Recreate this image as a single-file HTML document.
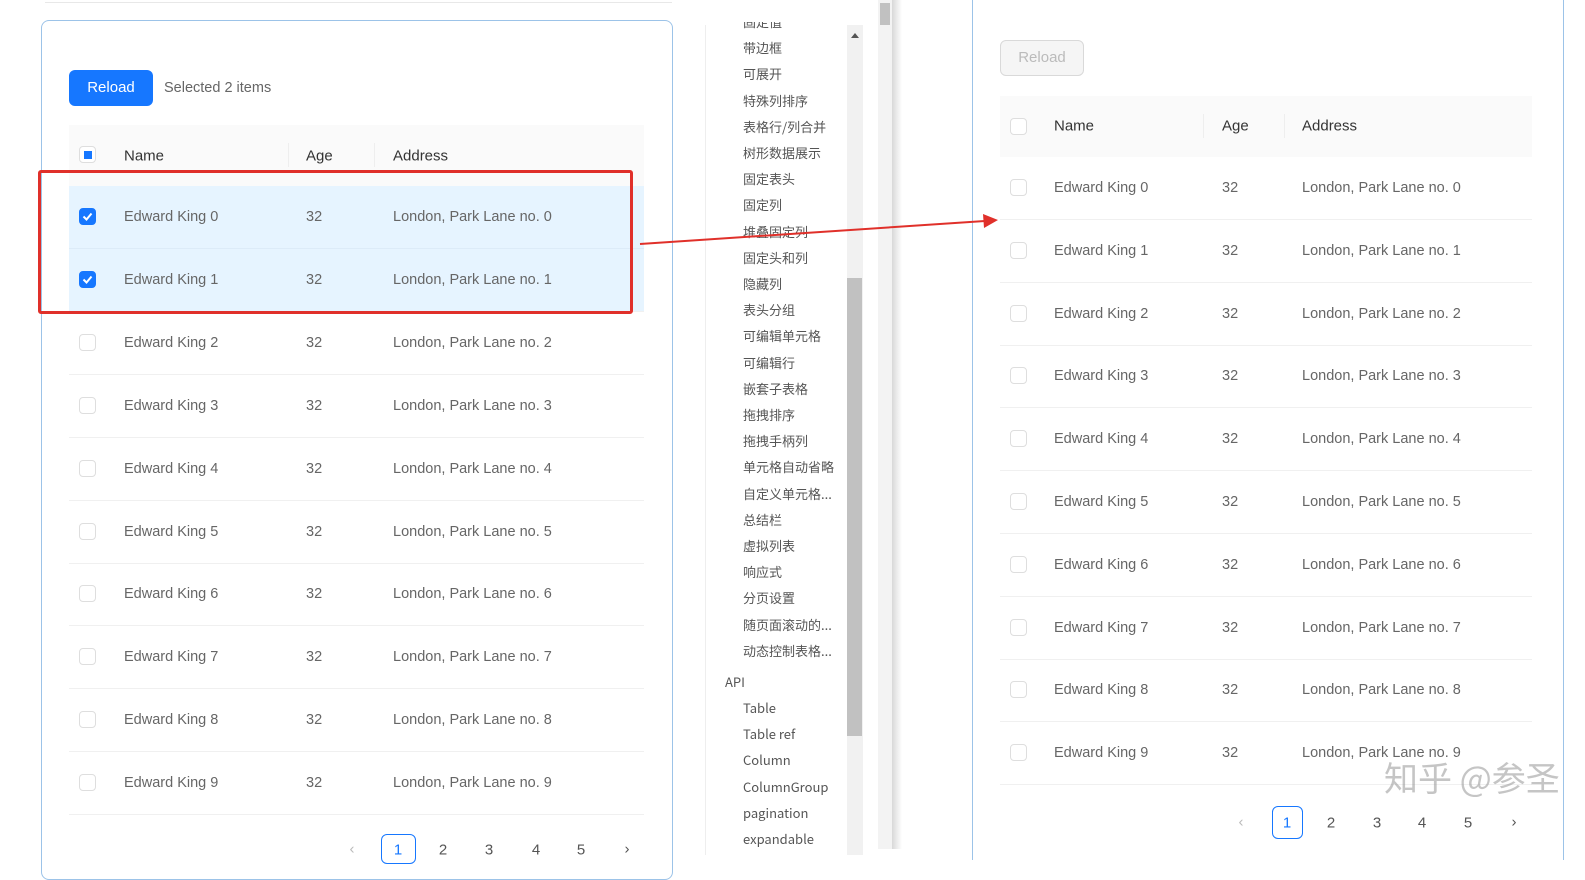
<!DOCTYPE html>
<html><head><meta charset="utf-8"><style>
*{margin:0;padding:0;box-sizing:border-box}
body{width:1585px;height:849px;overflow:hidden;background:#fff;position:relative;font-family:"Liberation Sans","Noto Sans CJK SC",sans-serif;color:#666;font-size:14.5px}
.a{position:absolute}
.panel{position:absolute;border:1.5px solid #9cc3e8;border-radius:8px;background:#fff}
.cb{position:absolute;width:17px;height:17px;border:1px solid #dedede;border-radius:4px;background:#fff}
.cb.on{background:#1677ff;border-color:#1677ff}
.t{position:absolute;white-space:nowrap;transform:translateY(-50%)}
.h{color:#333;font-size:15px}
.line{position:absolute;height:1px;background:#f0f0f0}
.side{position:absolute;left:743px;font-size:13px;color:#555;white-space:nowrap;font-family:"Noto Sans CJK SC","Liberation Sans",sans-serif}
.pg{position:absolute;font-size:15px;color:#555;transform:translate(-50%,-50%)}
</style></head><body>
<div class="a" style="left:45px;top:0;width:627px;height:3px;border-bottom:1px solid #e8e8e8"></div>

<div class="panel" style="left:41px;top:20px;width:632px;height:860px"></div>
<div class="a" style="left:69px;top:70px;width:84px;height:36px;background:#1677ff;border-radius:6px;color:#fff;font-size:15px;line-height:36px;text-align:center">Reload</div>
<div class="t" style="left:164px;top:88px">Selected 2 items</div>
<div class="a" style="left:69px;top:125px;width:575px;height:61px;background:#fafafa"></div>
<div class="a" style="left:288px;top:143px;width:1px;height:24px;background:#eee"></div>
<div class="a" style="left:374px;top:143px;width:1px;height:24px;background:#eee"></div>
<div class="cb" style="left:79px;top:146px"></div><div class="a" style="left:84px;top:151px;width:8px;height:8px;background:#1677ff"></div>
<div class="t h" style="left:124px;top:156px">Name</div>
<div class="t h" style="left:306px;top:156px">Age</div>
<div class="t h" style="left:393px;top:156px">Address</div>
<div class="a" style="left:69px;top:186px;width:575px;height:126px;background:#e6f4ff"></div>
<div class="line" style="left:69px;top:248px;width:575px;background:#dcebf8"></div>
<div id="L"></div>

<div class="a" style="left:705px;top:25px;width:1px;height:830px;background:#eee"></div>
<div class="a" style="left:847px;top:25px;width:16px;height:830px;background:#f1f1f1"></div>
<div class="a" style="left:847px;top:278px;width:15px;height:458px;background:#c1c1c1"></div>
<div class="a" style="left:851px;top:33px;width:0;height:0;border-left:4px solid transparent;border-right:4px solid transparent;border-bottom:5px solid #555"></div>
<div class="a" style="left:878px;top:0;width:14px;height:849px;background:#f3f3f3"></div>
<div class="a" style="left:880px;top:3px;width:10px;height:22px;background:#c1c1c1"></div>
<div class="a" style="left:892px;top:0;width:10px;height:849px;background:linear-gradient(90deg,#d8d8d8,#fff)"></div>
<div id="S"></div>

<div class="a" style="left:972px;top:0;width:592px;height:860px;border-left:1.5px solid #9cc3e8;border-right:1.5px solid #9cc3e8"></div>
<div class="a" style="left:1000px;top:40px;width:84px;height:36px;background:#f5f5f5;border:1px solid #d9d9d9;border-radius:6px;color:#bbb;font-size:15px;line-height:34px;text-align:center">Reload</div>
<div class="a" style="left:1000px;top:96px;width:532px;height:61px;background:#fafafa"></div>
<div class="a" style="left:1203px;top:114px;width:1px;height:24px;background:#eee"></div>
<div class="a" style="left:1284px;top:114px;width:1px;height:24px;background:#eee"></div>
<div class="cb" style="left:1010px;top:118px"></div>
<div class="t h" style="left:1054px;top:126px">Name</div>
<div class="t h" style="left:1222px;top:126px">Age</div>
<div class="t h" style="left:1302px;top:126px">Address</div>
<div id="R"></div>

<div class="a" style="left:1272px;top:806px;width:31px;height:33px;border:1px solid #1677ff;border-radius:6px"></div>
<div class="pg" style="left:1241px;top:822px;color:#bbb">‹</div>
<div class="pg" style="left:1287px;top:823px;color:#1677ff">1</div>
<div class="pg" style="left:1331px;top:823px">2</div>
<div class="pg" style="left:1377px;top:823px">3</div>
<div class="pg" style="left:1422px;top:823px">4</div>
<div class="pg" style="left:1468px;top:823px">5</div>
<div class="pg" style="left:1514px;top:822px">›</div>

<div class="a" style="left:381px;top:834px;width:35px;height:30px;border:1px solid #1677ff;border-radius:6px"></div>
<div class="pg" style="left:352px;top:849px;color:#bbb">‹</div>
<div class="pg" style="left:398px;top:850px;color:#1677ff">1</div>
<div class="pg" style="left:443px;top:850px">2</div>
<div class="pg" style="left:489px;top:850px">3</div>
<div class="pg" style="left:536px;top:850px">4</div>
<div class="pg" style="left:581px;top:850px">5</div>
<div class="pg" style="left:627px;top:849px">›</div>

<div class="a" style="left:1384px;top:760px;font-size:34px;line-height:1;color:rgba(140,140,140,.5);font-family:'Noto Sans CJK SC',sans-serif;white-space:nowrap">知乎 @参圣</div>

<div class="a" style="left:38px;top:170px;width:595px;height:144px;border:3px solid #e0302a;border-radius:3px"></div>
<svg class="a" style="left:0;top:0" width="1585" height="849"><line x1="640" y1="244" x2="985" y2="221" stroke="#e0302a" stroke-width="2"/><polygon points="998,220 983,214 984,228" fill="#e0302a"/></svg>

<script>
var L='',R='',S='';
for(var i=0;i<10;i++){
 var y=217+i*62.9;
 L+='<div class="cb'+(i<2?' on':'')+'" style="left:79px;top:'+(y-9)+'px"></div>';
 if(i<2)L+='<svg class="a" style="left:79px;top:'+(y-9)+'px" width="17" height="17"><path d="M4.5 8.5 L7.5 11.5 L12.5 5.5" stroke="#fff" stroke-width="2" fill="none"/></svg>';
 L+='<div class="t" style="left:124px;top:'+y+'px">Edward King '+i+'</div><div class="t" style="left:306px;top:'+y+'px">32</div><div class="t" style="left:393px;top:'+y+'px">London, Park Lane no. '+i+'</div>';
 if(i!=0)L+='<div class="line" style="left:69px;top:'+(y+31)+'px;width:575px"></div>';
 var r=188+i*62.8;
 R+='<div class="cb" style="left:1010px;top:'+(r-9)+'px"></div><div class="t" style="left:1054px;top:'+r+'px">Edward King '+i+'</div><div class="t" style="left:1222px;top:'+r+'px">32</div><div class="t" style="left:1302px;top:'+r+'px">London, Park Lane no. '+i+'</div><div class="line" style="left:1000px;top:'+(r+31)+'px;width:532px"></div>';
}
var items=['固定值','带边框','可展开','特殊列排序','表格行/列合并','树形数据展示','固定表头','固定列','堆叠固定列','固定头和列','隐藏列','表头分组','可编辑单元格','可编辑行','嵌套子表格','拖拽排序','拖拽手柄列','单元格自动省略','自定义单元格...','总结栏','虚拟列表','响应式','分页设置','随页面滚动的...','动态控制表格...'];
for(var j=0;j<items.length;j++){S+='<div class="side" style="top:'+(12+j*26.2)+'px">'+items[j]+'</div>';}
S+='<div class="side" style="left:725px;top:672px">API</div>';
var api=['Table','Table ref','Column','ColumnGroup','pagination','expandable'];
for(var k=0;k<api.length;k++)S+='<div class="side" style="top:'+(698+k*26.2)+'px">'+api[k]+'</div>';
S+='<div class="a" style="left:705px;top:0;width:142px;height:22px;background:#fff"></div>';
document.getElementById('L').outerHTML=L;document.getElementById('R').outerHTML=R;document.getElementById('S').outerHTML=S;
</script>
</body></html>
